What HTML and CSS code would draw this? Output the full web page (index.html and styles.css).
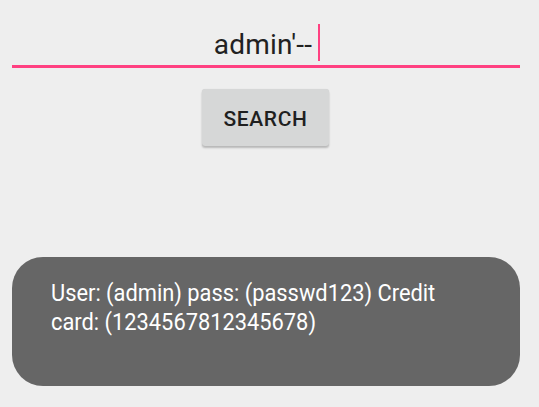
FILE: index.html
```html
<!DOCTYPE html>
<html>
<head>
<meta charset="utf-8">
<link rel="stylesheet" href="styles.css">
</head>
<body>
<div class="screen">
  <div class="field">
    <span class="value">admin'--</span>
    <span class="cursor"></span>
  </div>
  <div class="actions">
    <button class="btn">SEARCH</button>
  </div>
  <div class="toast">
    <div class="toast-text">User: (admin) pass: (passwd123) Credit<br>card: (1234567812345678)</div>
  </div>
</div>
</body>
</html>
```

FILE: styles.css
```css
html, body {
  margin: 0;
  padding: 0;
  background: #eeeeee;
}
body {
  width: 539px;
  height: 407px;
  overflow: hidden;
  font-family: Roboto, "Noto Sans", sans-serif;
}
.screen {
  padding: 0 19px 0 12px;
}
.field {
  display: flex;
  justify-content: center;
  align-items: flex-start;
  margin-top: 24px;
  height: 41px;
  border-bottom: 3px solid #ff4081;
  padding-left: 2px;
}
.value {
  font-size: 28px;
  letter-spacing: 0.2px;
  line-height: 37px;
  padding-top: 2px;
  color: #212121;
}
.cursor {
  width: 2px;
  height: 37px;
  margin-left: 6px;
  background: #ff4081;
}
.actions {
  display: flex;
  justify-content: center;
  margin-top: 21px;
  padding-right: 1px;
}
.btn {
  width: 127px;
  height: 57px;
  border: none;
  border-radius: 3px;
  background: #d6d7d7;
  color: #1f1f1f;
  font-family: Roboto, sans-serif;
  font-weight: 500;
  font-size: 21px;
  letter-spacing: 0.6px;
  padding: 2px 0 0;
  box-shadow: 0 2px 2px rgba(0,0,0,0.22), 0 0 1px rgba(0,0,0,0.12);
}
.toast {
  margin-top: 111px;
  height: 129px;
  box-sizing: border-box;
  border-radius: 31px;
  background: #666666;
  padding: 22px 0 0 39px;
  overflow: hidden;
}
.toast-text {
  color: #ffffff;
  font-size: 24px;
  line-height: 28.5px;
  white-space: nowrap;
  transform: scaleX(0.91);
  transform-origin: left top;
}
```
